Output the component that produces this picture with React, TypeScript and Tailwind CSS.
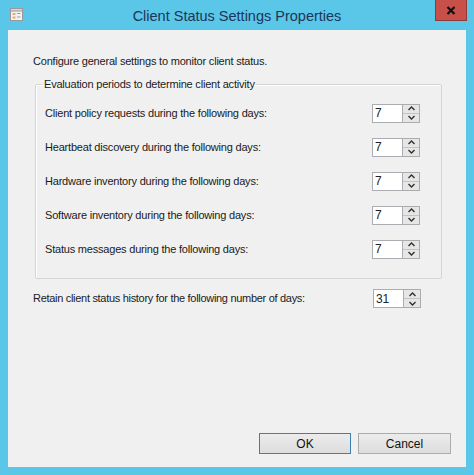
import React from "react";

const font = { fontFamily: '"Liberation Sans", Arial, sans-serif' };

const rows = [
  "Client policy requests during the following days:",
  "Heartbeat discovery during the following days:",
  "Hardware inventory during the following days:",
  "Software inventory during the following days:",
  "Status messages during the following days:",
];

function Chevron({ up }: { up?: boolean }) {
  return (
    <svg width="7" height="5" viewBox="0 0 7 5" className="block">
      <path
        d={up ? "M0.5 4 L3.5 1 L6.5 4" : "M0.5 1 L3.5 4 L6.5 1"}
        fill="none"
        stroke="#303030"
        strokeWidth="1.4"
      />
    </svg>
  );
}

function Spin({ value }: { value: string }) {
  return (
    <div className="flex h-[19px] w-[48px] shrink-0">
      <div className="flex h-full w-[31px] items-center border border-[#abadb3] bg-white pl-[2px] text-[12px] text-[#222]">
        {value}
      </div>
      <div className="flex h-full w-[17px] flex-col border border-l-0 border-[#acacac]">
        <div className="flex flex-1 items-center justify-center border-b border-[#c4c4c4] bg-[#e6e6e6]">
          <Chevron up />
        </div>
        <div className="flex flex-1 items-center justify-center bg-[#e6e6e6]">
          <Chevron />
        </div>
      </div>
    </div>
  );
}

function TitleIcon() {
  return (
    <svg width="13" height="13" viewBox="0 0 13 13">
      <rect x="0.5" y="0.5" width="12" height="12" fill="#f2f2f2" stroke="#9a9a9a" />
      <rect x="0.5" y="0.5" width="12" height="2.5" fill="#cfd8e0" stroke="#9a9a9a" />
      <rect x="2.5" y="5" width="3" height="2" fill="#e0b070" />
      <rect x="7" y="5" width="3.5" height="1" fill="#a0a0a0" />
      <rect x="2.5" y="8.5" width="3" height="2" fill="#e0b070" />
      <rect x="7" y="8.5" width="3.5" height="1" fill="#a0a0a0" />
    </svg>
  );
}

export default function App() {
  return (
    <div
      className="flex h-[475px] w-[474px] flex-col bg-[#5ac6e8] text-[#1a1a1a]"
      style={font}
    >
      {/* title bar */}
      <div className="flex h-[30px] shrink-0 items-start">
        <div className="w-[10px]" />
        <div className="mt-[8px]">
          <TitleIcon />
        </div>
        <div className="flex-1 pl-[16px] pt-[6px] text-center text-[14.5px] text-[#1d3557]">
          Client Status Settings Properties
        </div>
        <div className="flex h-[21px] w-[32px] items-center justify-center border border-t-0 border-[#8e3a36] bg-[#c7504a]">
          <svg width="10" height="9" viewBox="0 0 10 9">
            <path d="M1.5 1 L8.5 8 M8.5 1 L1.5 8" stroke="#111" strokeWidth="2.2" />
          </svg>
        </div>
        <div className="w-[7px]" />
      </div>

      {/* client area */}
      <div className="mx-[8px] mb-[8px] flex flex-1 flex-col bg-[#f0f0f0] text-[11px] tracking-[-0.2px]">
        <div className="ml-[25px] mt-[24px] leading-[14px]">
          Configure general settings to monitor client status.
        </div>

        <fieldset className="mx-[27px] mr-[24px] mt-[9px] rounded-[2px] border border-[#d5d5d5] px-[9px] pb-[12px] pt-[5px] shadow-[inset_1px_1px_0_#fff]">
          <legend className="ml-[-2px] px-[1px] leading-[14px]">
            Evaluation periods to determine client activity
          </legend>
          {rows.map((label) => (
            <div key={label} className="flex h-[34px] items-center justify-between pr-[12px]">
              <span>{label}</span>
              <Spin value="7" />
            </div>
          ))}
        </fieldset>

        <div className="ml-[25px] mr-[45px] mt-[10px] flex h-[19px] items-center justify-between">
          <span className="tracking-[-0.3px]">Retain client status history for the following number of days:</span>
          <Spin value="31" />
        </div>

        <div className="mt-auto flex justify-end gap-[7px] pb-[13px] pr-[15px]">
          <button className="h-[21px] w-[92px] border border-[#3c7fb1] bg-gradient-to-b from-[#ececec] to-[#dddddd] text-[12px] tracking-normal text-[#111]">
            OK
          </button>
          <button className="h-[21px] w-[93px] border border-[#acacac] bg-gradient-to-b from-[#ececec] to-[#dddddd] text-[12px] tracking-normal text-[#111]">
            Cancel
          </button>
        </div>
      </div>
    </div>
  );
}
